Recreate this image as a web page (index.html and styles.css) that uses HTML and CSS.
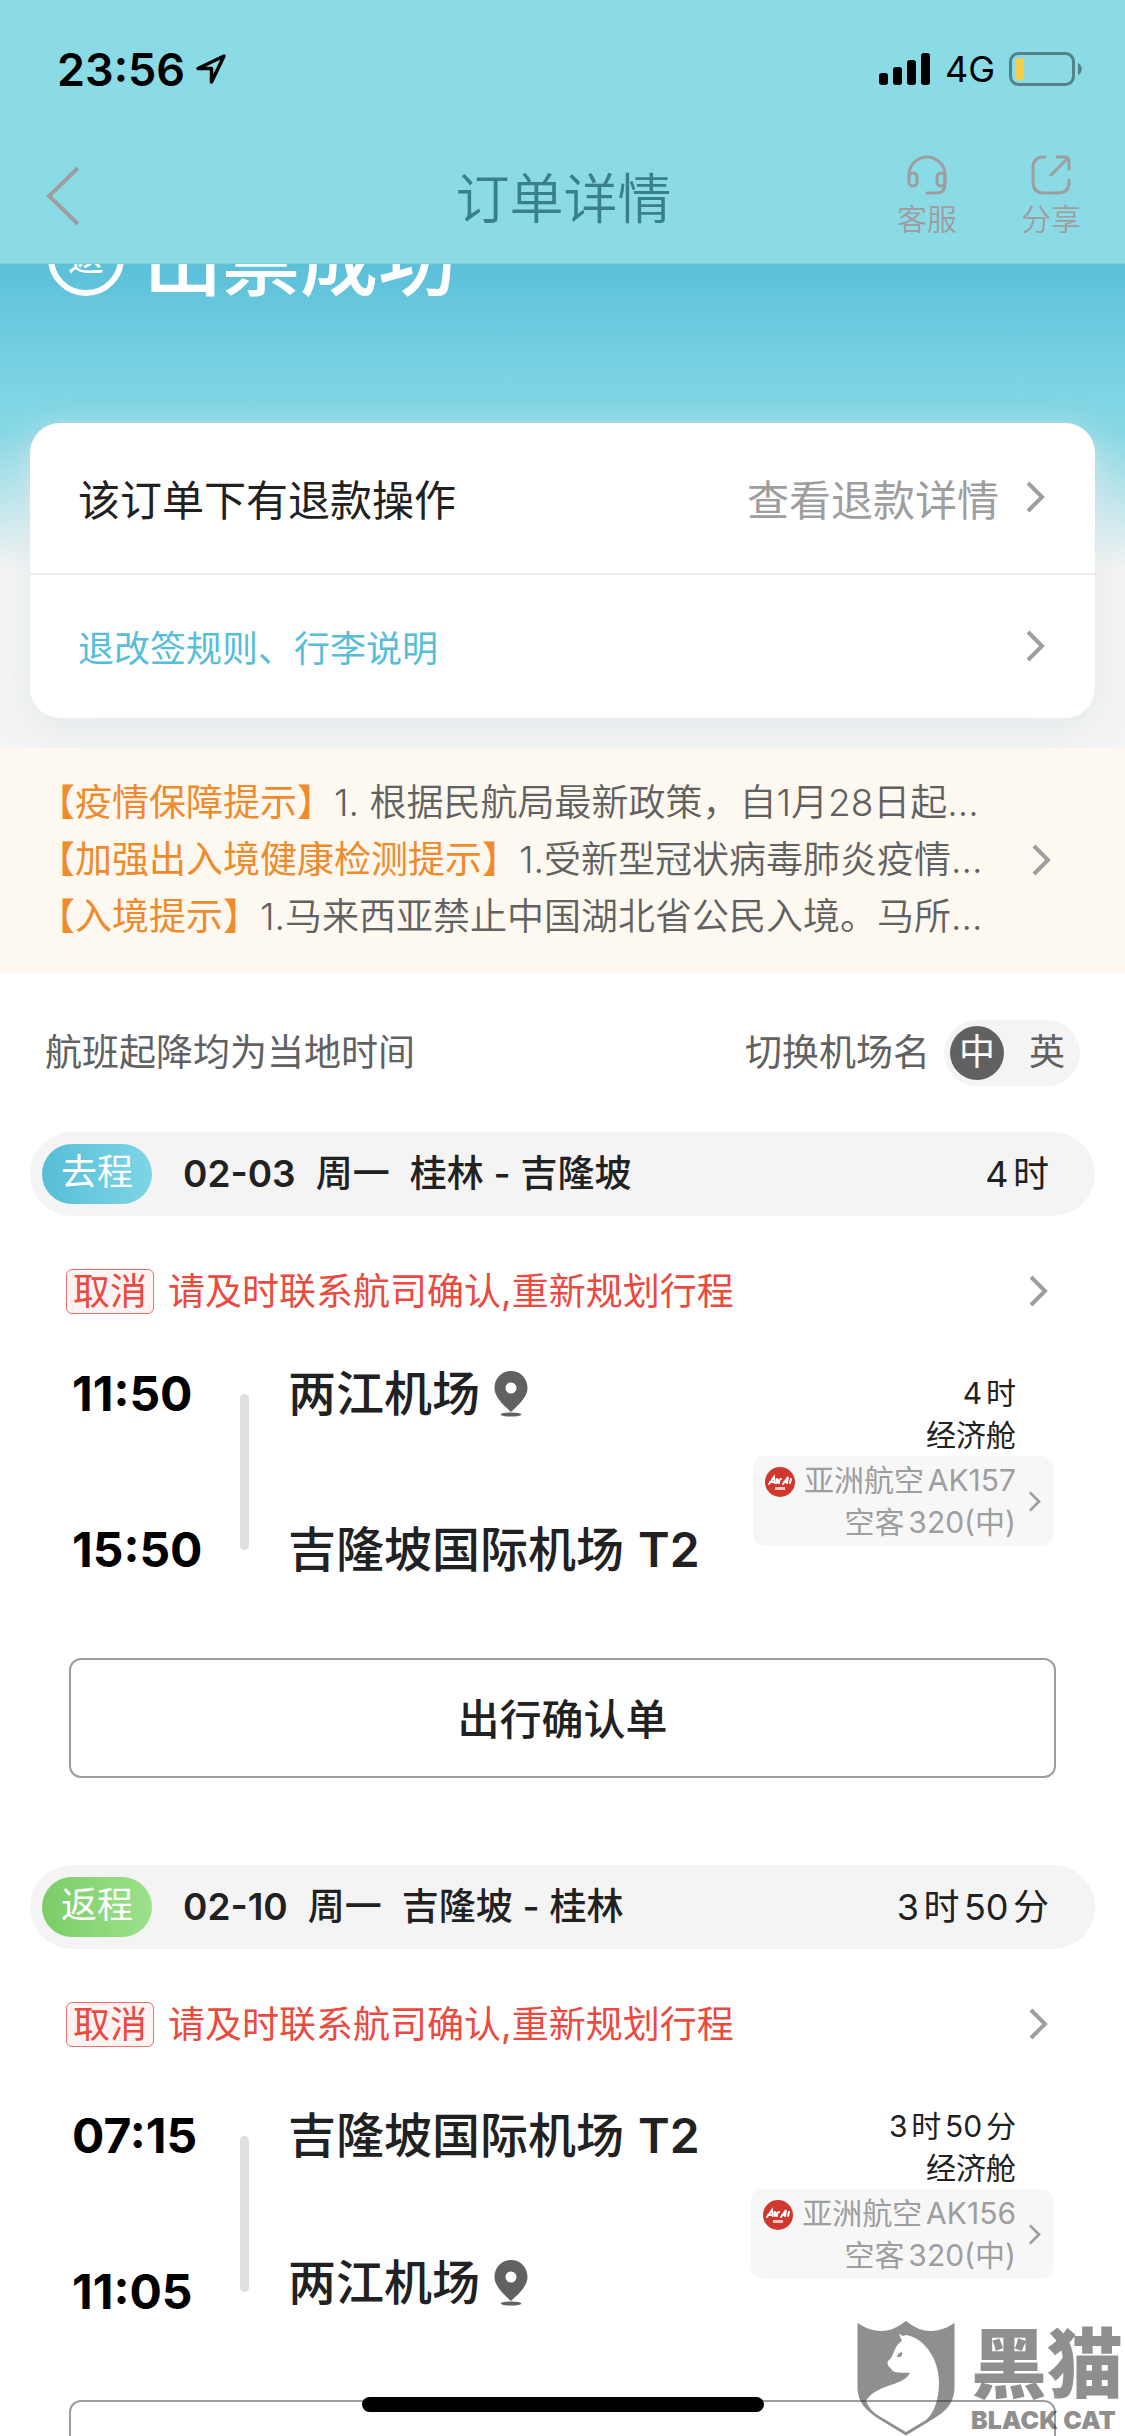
FILE: index.html
```html
<!DOCTYPE html>
<html lang="zh-CN">
<head>
<meta charset="utf-8">
<meta name="viewport" content="width=device-width, initial-scale=1">
<title>订单详情</title>
<link rel="stylesheet" href="styles.css">
</head>
<body>
<svg class="defs" aria-hidden="true">
  <symbol id="chevron" viewBox="0 0 20 32"><path d="M3 2l14 14L3 30" fill="none" stroke="currentColor" stroke-width="4"/></symbol>
  <symbol id="pin" viewBox="0 0 34 46"><path fill="currentColor" fill-rule="evenodd" d="M17 0C7.500 0 0.500 7.500 0.500 17C0.500 26 9 33.500 17 41C25 33.500 33.500 26 33.500 17C33.500 7.500 26.500 0 17 0zM17 11.500a5.500 5.500 0 1 1 0 11a5.500 5.500 0 1 1 0-11z"/><ellipse cx="17" cy="43.500" rx="10.500" ry="2" fill="currentColor"/></symbol>
</svg>
<div class="screen">
  <header class="top">
    <div class="status">
      <div class="status-side">
        <span class="clock">23:56</span>
        <svg class="locate" viewBox="0 0 32 32" aria-hidden="true"><path d="M29 3L3 15.500H16.500V29z" fill="none" stroke="#000" stroke-width="3.500" stroke-linejoin="round"/></svg>
      </div>
      <div class="status-side status-right">
        <svg class="signal" viewBox="0 0 52 32" aria-hidden="true"><rect y="20" width="9" height="12" rx="3"/><rect x="14" y="14" width="9" height="18" rx="3"/><rect x="28" y="7" width="9" height="25" rx="3"/><rect x="42" width="9" height="32" rx="3"/></svg>
        <span class="network">4G</span>
        <svg class="battery" viewBox="0 0 74 34" aria-hidden="true"><rect x="1.500" y="1.500" width="63" height="31" rx="8" fill="none" stroke="#538389" stroke-width="3"/><rect x="6" y="6" width="9" height="22" rx="4" fill="#f7ce46"/><path d="M69 11c5 2 5 10 0 12z" fill="#538389"/></svg>
      </div>
    </div>
    <nav class="nav">
      <button class="back" type="button" aria-label="返回"><svg viewBox="0 0 34 60"><path d="M32 2L3 30l29 28" fill="none" stroke="currentColor" stroke-width="4"/></svg></button>
      <h1 class="title">订单详情</h1>
      <div class="actions">
        <button class="action" type="button">
          <svg viewBox="0 0 40 40" fill="none" stroke="currentColor" stroke-width="3" stroke-linecap="round"><path d="M2 23V20a18 18 0 0 1 36 0v9q0 9-9 9h-9"/><rect x="2" y="18" width="8" height="13" rx="4"/><rect x="30" y="18" width="8" height="13" rx="4"/></svg>
          客服
        </button>
        <button class="action" type="button">
          <svg viewBox="0 0 40 40" fill="none" stroke="currentColor" stroke-width="3" stroke-linecap="round"><path d="M14 2h-1Q2 2 2 13v14q0 11 11 11h14q11 0 11-11v-2"/><path d="M26 2h8q4 0 4 4v8M37 3L20 20"/></svg>
          分享
        </button>
      </div>
    </nav>
  </header>

  <main class="content">
    <section class="hero">
      <div class="state">
        <span class="state-icon">返</span>
        <h2 class="state-text">出票成功</h2>
      </div>
      <div class="card">
        <a class="card-row" href="#refund">
          <span class="card-title">该订单下有退款操作</span>
          <span class="card-more">查看退款详情</span>
          <svg class="chevron"><use href="#chevron"/></svg>
        </a>
        <a class="card-row card-rules" href="#rules">
          <span class="card-title">退改签规则、行李说明</span>
          <svg class="chevron"><use href="#chevron"/></svg>
        </a>
      </div>
    </section>

    <a class="notice" href="#notice">
      <span class="notice-lines">
        <span class="notice-line"><b>【疫情保障提示】</b>1. 根据民航局最新政策，自1月28日起...</span>
        <span class="notice-line"><b>【加强出入境健康检测提示】</b>1.受新型冠状病毒肺炎疫情...</span>
        <span class="notice-line"><b>【入境提示】</b>1.马来西亚禁止中国湖北省公民入境。马所...</span>
      </span>
      <svg class="chevron"><use href="#chevron"/></svg>
    </a>

    <div class="options">
      <span>航班起降均为当地时间</span>
      <div class="names" role="radiogroup" aria-labelledby="names-label">
        <span id="names-label">切换机场名</span>
        <span class="switch">
          <input class="hidden" type="radio" name="lang" id="zh" checked><label for="zh">中</label>
          <input class="hidden" type="radio" name="lang" id="en"><label for="en">英</label>
        </span>
      </div>
    </div>

    <section class="leg">
      <div class="leg-bar">
        <span class="badge">去程</span>
        <h3 class="leg-title"><span class="latin">02-03</span><span>周一</span><span>桂林 - 吉隆坡</span></h3>
        <span class="leg-time">4时</span>
      </div>
      <a class="alert" href="#cancel-out">
        <span class="tag">取消</span>
        <span class="alert-text">请及时联系航司确认,重新规划行程</span>
        <svg class="chevron"><use href="#chevron"/></svg>
      </a>
      <div class="route">
        <div class="timeline">
          <div class="times"><time>11:50</time><time>15:50</time></div>
          <div class="line"></div>
          <div class="stations">
            <div class="station">两江机场<svg class="pin"><use href="#pin"/></svg></div>
            <div class="station">吉隆坡国际机场<span class="latin">T2</span></div>
          </div>
        </div>
        <div class="flight">
          <span class="flight-info">4时</span>
          <span class="flight-info">经济舱</span>
          <a class="plane" href="#ak157">
            <svg class="airline" viewBox="0 0 30 30" aria-hidden="true"><circle cx="15" cy="15" r="15" fill="#d0382f"/><path d="M4 17q3-4 5-7l1 6M5 15h4M12 12v4M14 16v-3l2-1M18 17q3-4 5-7l-1 6M19 15h3M26 12l-1 4" fill="none" stroke="#fff" stroke-width="2" stroke-linecap="round"/><path d="M10 20h10v3H10z" fill="#f3c4c0"/></svg>
            <span class="plane-text">亚洲航空AK157<br>空客320(中)</span>
            <svg class="chevron-small"><use href="#chevron"/></svg>
          </a>
        </div>
      </div>
      <button class="confirm" type="button">出行确认单</button>
    </section>

    <section class="leg leg-return">
      <div class="leg-bar">
        <span class="badge">返程</span>
        <h3 class="leg-title"><span class="latin">02-10</span><span>周一</span><span>吉隆坡 - 桂林</span></h3>
        <span class="leg-time">3时50分</span>
      </div>
      <a class="alert" href="#cancel-back">
        <span class="tag">取消</span>
        <span class="alert-text">请及时联系航司确认,重新规划行程</span>
        <svg class="chevron"><use href="#chevron"/></svg>
      </a>
      <div class="route">
        <div class="timeline">
          <div class="times"><time>07:15</time><time>11:05</time></div>
          <div class="line"></div>
          <div class="stations">
            <div class="station">吉隆坡国际机场<span class="latin">T2</span></div>
            <div class="station">两江机场<svg class="pin"><use href="#pin"/></svg></div>
          </div>
        </div>
        <div class="flight">
          <span class="flight-info">3时50分</span>
          <span class="flight-info">经济舱</span>
          <a class="plane" href="#ak156">
            <svg class="airline" viewBox="0 0 30 30" aria-hidden="true"><circle cx="15" cy="15" r="15" fill="#d0382f"/><path d="M4 17q3-4 5-7l1 6M5 15h4M12 12v4M14 16v-3l2-1M18 17q3-4 5-7l-1 6M19 15h3M26 12l-1 4" fill="none" stroke="#fff" stroke-width="2" stroke-linecap="round"/><path d="M10 20h10v3H10z" fill="#f3c4c0"/></svg>
            <span class="plane-text">亚洲航空AK156<br>空客320(中)</span>
            <svg class="chevron-small"><use href="#chevron"/></svg>
          </a>
        </div>
      </div>
      <button class="confirm" type="button">出行确认单</button>
    </section>
  </main>

  <div class="home-indicator"></div>
  <div class="watermark">
    <svg class="shield" viewBox="0 0 98 116" aria-hidden="true"><path fill="currentColor" fill-rule="evenodd" d="M0.500 3Q26 20 49 1Q72 20 97.500 3V68C97 84 88 92 76 99L49 115.500L22 99C8 90 1 82 0.500 68zM42 14L45 21C36 26 38 36 31 41C29 45 33 47 35 50C38 54 46 52 53 53C46 65 30 63 15 74Q10 78 9 81Q13 91 22 96L49 112L69 100C78 92 82 78 82 62C82 40 68 18 49 15L46 16z"/><path fill="currentColor" d="M40 36q1-3 5-4q1 3-2 5q-2 1-3-1z"/></svg>
    <div class="brand"><span class="brand-zh">黑猫</span><span class="brand-en">BLACK CAT</span></div>
  </div>
</div>
</body>
</html>
```

FILE: styles.css
```css
* {
  box-sizing: border-box;
}

body {
  margin: 0;
  background: #fff;
  color: #212121;
  font-family: Inter, "Noto Sans CJK SC", sans-serif;
  font-size: 36px;
}

h1,
h2,
h3 {
  margin: 0;
  font-weight: 400;
}

a {
  color: inherit;
  text-decoration: none;
}

button {
  padding: 0;
  border: 0;
  background: none;
  color: inherit;
  font: inherit;
}

svg {
  display: block;
  flex: none;
}

.defs,
.hidden {
  position: absolute;
  width: 0;
  height: 0;
  margin: 0;
  overflow: hidden;
  appearance: none;
}

.screen {
  position: relative;
  display: flex;
  flex-direction: column;
  height: 100vh;
  overflow: hidden;
}

/* Status bar and navigation */
.top {
  flex: none;
  background: #8bdbe7;
  border-bottom: 1px solid #84cbd8;
}

.status {
  display: flex;
  justify-content: space-between;
  align-items: center;
  height: 132px;
  padding: 6px 42px 0 57px;
  color: #000;
}

.status-side {
  display: flex;
  align-items: center;
  gap: 10px;
}

.status-right {
  gap: 14px;
}

.clock {
  font-size: 45px;
  font-weight: 600;
}

.locate {
  width: 32px;
  height: 32px;
}

.signal {
  width: 52px;
  height: 32px;
}

.network {
  font-size: 36px;
  font-weight: 400;
}

.battery {
  width: 74px;
  height: 34px;
}

.nav {
  display: grid;
  grid-template-columns: 1fr auto 1fr;
  align-items: center;
  height: 131px;
  padding: 0 44px 4px 46px;
  color: #9e9e9e;
}

.back svg {
  width: 34px;
  height: 60px;
}

.back {
  justify-self: start;
}

.title {
  color: #3a7f8c;
  font-size: 54px;
  font-weight: 350;
}

.actions {
  display: flex;
  justify-content: flex-end;
  gap: 64px;
}

.action {
  display: flex;
  flex-direction: column;
  align-items: center;
  gap: 6px;
  font-size: 30px;
  font-weight: 350;
  line-height: 36px;
}

.action svg {
  width: 40px;
  height: 40px;
}

.content {
  flex: 1;
  min-height: 0;
  overflow: hidden;
}

/* Order state */
.hero {
  padding: 0 30px 30px;
  background: linear-gradient(#57bdd8 8%, #7ad3e3 32%, #86d8e5 42%, #f4f4f4 67%);
}

.state {
  display: flex;
  align-items: center;
  gap: 20px;
  height: 108px;
  margin-top: -60px;
  padding-left: 18px;
  color: #fff;
}

.state-icon {
  width: 76px;
  height: 76px;
  border: 6px solid #fff;
  border-radius: 50%;
  font-size: 36px;
  line-height: 64px;
  text-align: center;
}

.state-text {
  padding-bottom: 4px;
  font-size: 78px;
  font-weight: 500;
}

.card {
  margin-top: 111px;
  border-radius: 30px;
  background: #fff;
  box-shadow: 0 9px 36px rgba(222, 230, 233, 0.8);
}

.card-row {
  display: flex;
  align-items: center;
  height: 152px;
  padding: 0 50px 2px 48px;
  border-bottom: 2px solid #eee;
  font-size: 42px;
}

.card-row.card-rules {
  height: 143px;
  border: 0;
  color: #57bdd8;
  font-size: 36px;
}

.card-title {
  flex: 1;
}

.card-more {
  margin-right: 26px;
  color: #9e9e9e;
}

.chevron {
  width: 20px;
  height: 32px;
  color: #9e9e9e;
}

/* Travel notices */
.notice {
  display: flex;
  align-items: center;
  justify-content: space-between;
  padding: 26px 74px 28px 38px;
  background: #fdf8f0;
  color: #616161;
  font-size: 37px;
  font-weight: 350;
  line-height: 57px;
}

.notice-line {
  display: block;
  white-space: nowrap;
}

.notice b {
  color: #ef8a2d;
  font-weight: 400;
}

.options {
  display: flex;
  align-items: center;
  justify-content: space-between;
  height: 159px;
  padding: 0 45px;
  color: #616161;
  font-size: 37px;
  line-height: 44px;
}

.names {
  display: flex;
  align-items: center;
  gap: 14px;
}

.switch {
  display: flex;
  gap: 16px;
  padding: 6px;
  border-radius: 33px;
  background: #f4f4f4;
  font-size: 36px;
}

.switch label {
  width: 54px;
  height: 54px;
  border-radius: 50%;
  line-height: 52px;
  text-align: center;
}

.switch input:checked + label {
  background: #616161;
  color: #fff;
}

/* Flight legs */
.leg {
  padding: 0 30px;
  margin-bottom: 87px;
}

.leg-bar {
  display: flex;
  align-items: center;
  height: 84px;
  padding: 0 46px 0 12px;
  border-radius: 42px;
  background: #f4f4f4;
  line-height: 56px;
}

.badge {
  width: 110px;
  height: 60px;
  border-radius: 30px;
  background: linear-gradient(90deg, #57bdd8, #7dd6e5);
  color: #fff;
  text-align: center;
}

.leg-return .badge {
  background: linear-gradient(90deg, #7bcd67, #9ce18c);
}

.leg-title {
  display: flex;
  flex: 1;
  align-items: baseline;
  gap: 20px;
  margin-left: 31px;
  font-size: 37px;
  font-weight: 500;
}

.latin {
  font-weight: 600;
}

.leg-time,
.flight {
  text-autospace: normal;
}

.alert {
  display: flex;
  align-items: center;
  height: 150px;
  padding: 0 47px 0 36px;
  color: #ea4a3f;
  font-size: 37px;
  line-height: 43px;
}

.tag {
  padding: 0 6px;
  border: 1px solid #f0716a;
  border-radius: 6px;
  background: #fdf3f3;
}

.alert-text {
  flex: 1;
  margin-left: 14px;
}

.route {
  display: flex;
  justify-content: space-between;
  align-items: flex-start;
  padding: 0 42px;
}

.timeline {
  display: flex;
  height: 212px;
  font-size: 48px;
  line-height: 56px;
}

.leg-return .timeline {
  height: 221px;
  padding-top: 9px;
}

.leg-return .stations {
  padding-bottom: 9px;
}

.times,
.stations {
  display: flex;
  flex-direction: column;
  justify-content: space-between;
}

.times {
  width: 168px;
  color: #000;
  font-weight: 700;
}

.line {
  width: 9px;
  margin: 28px 39px 28px 0;
  border-radius: 5px;
  background: #e0e0e0;
}

.station {
  display: flex;
  align-items: baseline;
  gap: 14px;
  font-weight: 500;
}

.pin {
  align-self: center;
  width: 34px;
  height: 46px;
  color: #616161;
}

.flight {
  display: flex;
  flex-direction: column;
  align-items: flex-end;
  padding-top: 6px;
  font-size: 30px;
  line-height: 42px;
}

.flight-info {
  padding-right: 37px;
}

.plane {
  display: flex;
  align-items: center;
  padding: 3px 12px;
  border-radius: 12px;
  background: #f7f7f7;
  color: #9e9e9e;
  text-align: right;
}

.airline {
  align-self: flex-start;
  width: 30px;
  height: 30px;
  margin: 8px 9px 0 0;
}

.chevron-small {
  width: 13px;
  height: 21px;
  margin-left: 12px;
}

.confirm {
  display: block;
  width: calc(100% - 78px);
  height: 120px;
  margin: 80px 39px 0;
  padding-bottom: 4px;
  border: 2px solid #9e9e9e;
  border-radius: 12px;
  font-size: 42px;
  font-weight: 500;
}

/* Overlays */
.home-indicator {
  position: absolute;
  bottom: 24px;
  left: 50%;
  width: 402px;
  height: 15px;
  border-radius: 8px;
  background: #000;
  transform: translateX(-50%);
}

.watermark {
  position: absolute;
  right: 2px;
  bottom: 0;
  display: flex;
  gap: 16px;
  color: #231f20;
  opacity: 0.5;
}

.shield {
  width: 98px;
  height: 116px;
}

.brand {
  display: flex;
  flex-direction: column;
}

.brand-zh {
  font-size: 76px;
  font-weight: 900;
  line-height: 88px;
}

.brand-en {
  font-size: 25px;
  font-weight: 900;
  line-height: 24px;
}
```
